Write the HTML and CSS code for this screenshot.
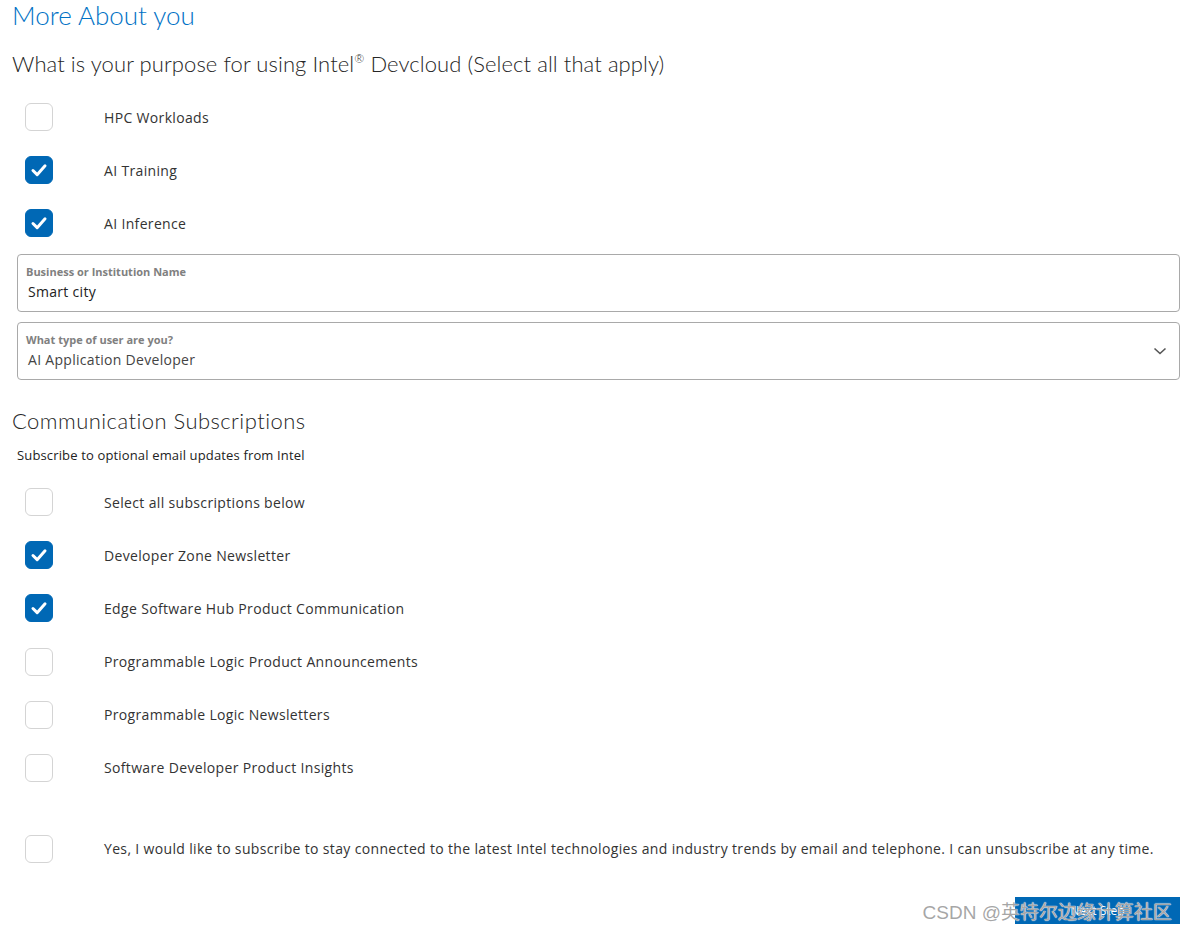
FILE: index.html
```html
<!DOCTYPE html>
<html>
<head>
<meta charset="utf-8">
<link rel="stylesheet" href="styles.css">
</head>
<body>
<div class="page">
  <h1 class="title">More About you</h1>
  <h2 class="subtitle">What is your purpose for using Intel<sup>®</sup> Devcloud (Select all that apply)</h2>
  <div class="checks">
    <label class="row"><span class="box"></span><span class="lbl">HPC Workloads</span></label>
    <label class="row"><span class="box on"><svg viewBox="0 0 28 28"><path d="M7.5 14.5 L12 19 L20.5 9.5" /></svg></span><span class="lbl">AI Training</span></label>
    <label class="row"><span class="box on"><svg viewBox="0 0 28 28"><path d="M7.5 14.5 L12 19 L20.5 9.5" /></svg></span><span class="lbl">AI Inference</span></label>
  </div>
  <div class="field">
    <div class="flabel">Business or Institution Name</div>
    <div class="fvalue">Smart city</div>
  </div>
  <div class="field select">
    <div>
      <div class="flabel">What type of user are you?</div>
      <div class="fvalue muted">AI Application Developer</div>
    </div>
    <svg class="chev" viewBox="0 0 14 10"><path d="M1.5 2.5 L7 7.5 L12.5 2.5"/></svg>
  </div>
  <h2 class="subtitle comm">Communication Subscriptions</h2>
  <p class="note">Subscribe to optional email updates from Intel</p>
  <div class="checks checks2">
    <label class="row"><span class="box"></span><span class="lbl">Select all subscriptions below</span></label>
    <label class="row"><span class="box on"><svg viewBox="0 0 28 28"><path d="M7.5 14.5 L12 19 L20.5 9.5" /></svg></span><span class="lbl">Developer Zone Newsletter</span></label>
    <label class="row"><span class="box on"><svg viewBox="0 0 28 28"><path d="M7.5 14.5 L12 19 L20.5 9.5" /></svg></span><span class="lbl">Edge Software Hub Product Communication</span></label>
    <label class="row"><span class="box"></span><span class="lbl">Programmable Logic Product Announcements</span></label>
    <label class="row"><span class="box"></span><span class="lbl">Programmable Logic Newsletters</span></label>
    <label class="row"><span class="box"></span><span class="lbl">Software Developer Product Insights</span></label>
  </div>
  <label class="row consent"><span class="box"></span><span class="lbl">Yes, I would like to subscribe to stay connected to the latest Intel technologies and industry trends by email and telephone. I can unsubscribe at any time.</span></label>
  <div class="actions">
    <button class="next">Next Step</button>
    <span class="watermark">CSDN @英特尔边缘计算社区</span>
  </div>
</div>
</body>
</html>
```
FILE: styles.css
```css
html, body { margin: 0; padding: 0; background: #fff; }
body { font-family: "Open Sans", "Noto Sans", sans-serif; color: #333; }
.page { width: 1188px; height: 934px; overflow: hidden; position: relative; }
.title {
  margin: 0; padding: 0 0 0 12px;
  font-family: "Lato", "Open Sans", sans-serif; font-weight: 300;
  font-size: 26px; line-height: 30px; color: #0071c5;
}
.subtitle {
  margin: 20px 0 0 0; padding-left: 12px;
  font-family: "Lato", "Open Sans", sans-serif; font-weight: 300;
  font-size: 22px; line-height: 28px; color: #262626; letter-spacing: 0.08px;
}
.subtitle sup { font-size: 12px; vertical-align: 9px; line-height: 0; }
.checks { display: flex; flex-direction: column; gap: 25px; margin-top: 25px; padding-left: 25px; }
.row { display: flex; align-items: center; height: 28px; }
.box {
  width: 26px; height: 26px; border: 1px solid #d4d4d4; border-radius: 6px;
  flex: none; display: flex; background: #fff;
}
.box.on { background: #0068b5; border-color: #0068b5; }
.box svg { width: 26px; height: 26px; }
.box svg path { fill: none; stroke: #fff; stroke-width: 3.2; stroke-linecap: round; stroke-linejoin: round; }
.lbl { margin-left: 51px; font-size: 14px; color: #333; letter-spacing: 0.34px; }
.field {
  margin: 17px 8px 0 17px; height: 56px; border: 1px solid #a9a9a9; border-radius: 4px;
  box-sizing: content-box; padding: 0 10px 0 8px; display: flex; flex-direction: column; justify-content: center;
}
.field + .field { margin-top: 10px; }
.field.select { flex-direction: row; align-items: center; justify-content: space-between; }
.flabel { font-size: 11px; font-weight: 700; color: #808080; line-height: 14px; }
.fvalue { font-size: 14px; color: #222; line-height: 20px; margin-top: 3px; margin-left: 2px; letter-spacing: 0.3px; }
.fvalue.muted { color: #444; }
.chev { width: 14px; height: 10px; margin-right: 2px; }
.chev path { fill: none; stroke: #555; stroke-width: 1.6; }
.comm { margin-top: 27px; letter-spacing: 0.45px; }
.note { margin: 11px 0 0 17px; font-size: 13px; color: #222; letter-spacing: 0.15px; }
.checks2 { margin-top: 24px; gap: 25.2px; }
.consent { margin-top: 53px; padding-left: 25px; }
.actions { display: flex; justify-content: flex-end; margin-top: 34px; padding-right: 8px; position: relative; }
.next {
  width: 165px; height: 27px; border: 0; border-radius: 0; background: #0068b5;
  color: #fff; font-family: "Open Sans", sans-serif; font-size: 12px; cursor: pointer;
}
.watermark {
  position: absolute; right: 16px; top: 5px;
  font-family: "Liberation Sans", "Noto Sans CJK SC", sans-serif; font-size: 19px; line-height: 22px;
  color: rgba(150, 150, 150, 0.85); text-shadow: 0 0 1px #fff, 0 0 1px #fff;
  pointer-events: none; white-space: nowrap;
}
```
